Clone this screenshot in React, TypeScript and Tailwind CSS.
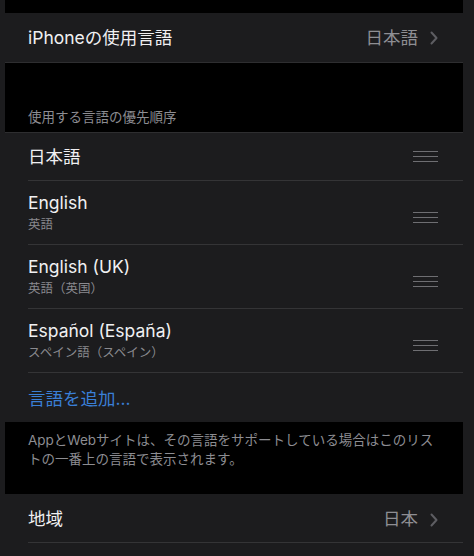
import React from "react";

const FONT = 'Inter, "Noto Sans CJK JP", "Noto Sans", sans-serif';

function Chevron() {
  return (
    <svg width="8" height="14" viewBox="0 0 8 14" fill="none" className="ml-[12px]">
      <path d="M1.5 1.5 L6.5 7 L1.5 12.5" stroke="#5d5d62" strokeWidth="2" strokeLinecap="round" strokeLinejoin="round" />
    </svg>
  );
}

function Handle() {
  return (
    <div className="flex flex-col gap-[3.5px] w-[25px] mr-[1px]">
      <div className="h-[1.5px] bg-[#6e6e72]" />
      <div className="h-[1.5px] bg-[#6e6e72]" />
      <div className="h-[1.5px] bg-[#6e6e72]" />
    </div>
  );
}

function LangRow({ title, sub }: { title: string; sub?: string }) {
  if (!sub) {
    return (
      <div className="pl-[23px]">
        <div className="h-[48px] flex items-center justify-between pr-[24px] border-b border-[#343436]">
          <span className="text-[17.5px] mt-[1px] text-[#f0f0f2]">{title}</span>
          <Handle />
        </div>
      </div>
    );
  }
  return (
    <div className="pl-[23px]">
      <div className="h-[64px] flex items-center justify-between pr-[24px] border-b border-[#343436]">
        <div className="flex flex-col">
          <span className="text-[17.5px] leading-[22px] text-[#f0f0f2]">{title}</span>
          <span className="text-[12.5px] leading-[18px] mt-[2px] text-[#8a8a8f]">{sub}</span>
        </div>
        <div className="mt-[10px]">
          <Handle />
        </div>
      </div>
    </div>
  );
}

export default function App() {
  return (
    <div className="w-[474px] h-[556px] bg-[#1c1c1e] overflow-hidden" style={{ fontFamily: FONT }}>
      <div className="ml-[5px] w-[458px] flex flex-col">
        <div className="h-[13px] bg-black" />
        <div className="h-[50px] bg-[#1c1c1e] border-b border-[#2e2e30] flex items-center justify-between pl-[23px] pr-[25px] pt-[1px]">
          <span className="text-[17.5px] text-[#f0f0f2]">iPhoneの使用言語</span>
          <div className="flex items-center">
            <span className="text-[17.5px] text-[#8e8e93]">日本語</span>
            <Chevron />
          </div>
        </div>
        <div className="h-[70px] bg-black flex items-end pl-[23px] pb-[6px] border-b border-[#2e2e30]">
          <span className="text-[13.5px] leading-[18px] text-[#8d8d92]">使用する言語の優先順序</span>
        </div>
        <div className="bg-[#1c1c1e]">
          <LangRow title="日本語" />
          <LangRow title="English" sub="英語" />
          <LangRow title="English (UK)" sub="英語（英国）" />
          <LangRow title="Español (España)" sub="スペイン語（スペイン）" />
          <div className="h-[49px] flex items-center pl-[23px] pt-[4px]">
            <span className="text-[17.5px] text-[#3a7fd6]">言語を追加...</span>
          </div>
        </div>
        <div className="h-[72px] bg-black pl-[23px] pr-[10px] pt-[9px]">
          <p className="text-[13.5px] leading-[18.5px] text-[#8d8d92] whitespace-nowrap">
            AppとWebサイトは、その言語をサポートしている場合はこのリス
            <br />
            トの一番上の言語で表示されます。
          </p>
        </div>
        <div className="pl-[23px] bg-[#1c1c1e]">
          <div className="h-[49px] flex items-center justify-between pr-[25px] pt-[3px] border-b border-[#343436]">
            <span className="text-[17.5px] text-[#f0f0f2]">地域</span>
            <div className="flex items-center">
              <span className="text-[17.5px] text-[#8e8e93]">日本</span>
              <Chevron />
            </div>
          </div>
        </div>
      </div>
    </div>
  );
}
